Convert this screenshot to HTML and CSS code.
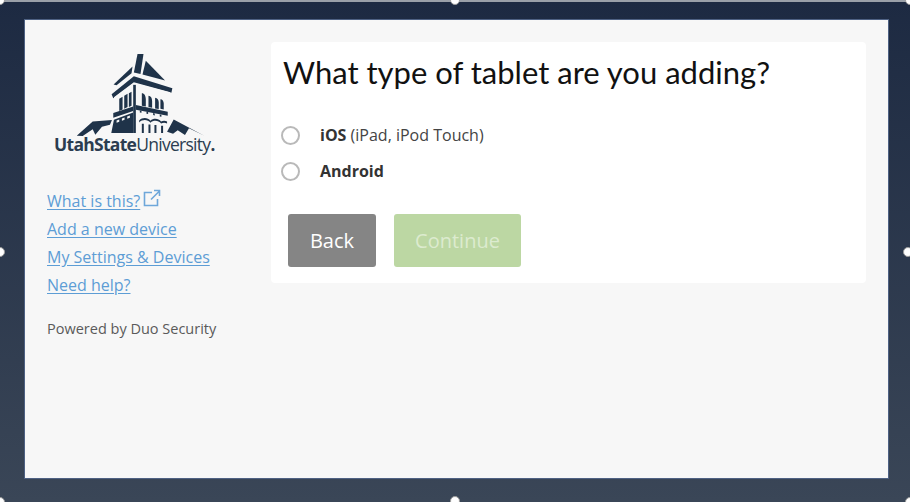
FILE: index.html
```html
<!DOCTYPE html>
<html lang="en">
<head>
<meta charset="utf-8">
<title>Duo enrollment</title>
<link rel="stylesheet" href="styles.css">
</head>
<body>
<div class="frame">
  <span class="handle h-tl"></span><span class="handle h-t"></span><span class="handle h-tr"></span>
  <span class="handle h-l"></span><span class="handle h-r"></span>
  <span class="handle h-bl"></span><span class="handle h-b"></span><span class="handle h-br"></span>
  <main class="panel">
    <aside class="sidebar">
      <div class="logo">
        <svg class="logo-mark" viewBox="120 50 400 265" width="133" height="88" aria-hidden="true">
          <g fill="#1f3349">
            <path d="M311 62h18l-9 60-20-4z"/>
            <path d="M336 82l58 60-68-18z"/>
            <path d="M296 100l-3 20-45 36-9-2z"/>
            <path d="M233 183l67-54 116 36-3 14-113-30-62 46z"/>
            <path d="M240 192l60-45 110 30-2 6-108-27-58 44z" fill="#f7f7f7"/>
            <path d="M298 155h8v145h-8z"/>
            <path d="M256 197l10-6v38l-10 5zM271 188l10-6v40l-10 5zM285 180l8-4v42l-8 4z"/>
            <path d="M238 240l60-20v14l-60 20zM306 216l96 20v12l-96-18z"/>
            <path d="M324 180c8 0 12 8 12 18v22l-12-2zM344 188c7 0 11 7 11 16v20l-11-2zM364 194c7 0 11 7 11 14v20l-11-2zM380 198c6 0 10 6 10 13v18l-10-2z"/>
            <path d="M232 300l8-40 58-22v62zM248 262l8-3v7l-8 3zM264 256l8-3v7l-8 3zM280 250l8-3v7l-8 3z" fill-rule="evenodd"/>
            <path d="M318 232l5 1v6l-5-1zM338 236l5 1v6l-5-1zM358 240l5 1v6l-5-1zM378 244l5 1v6l-5-1z"/>
            <path d="M316 262c10-10 26-9 34 1 8-8 24-8 32 2 6-3 12-3 18 0v6c-6-3-12-3-18 0-8-10-24-10-32-2-8-10-24-11-34-1z"/>
            <path d="M324 272h6v28h-6zM344 274h6v26h-6zM362 276h6v24h-6zM382 278h6v22h-6z"/>
            <path d="M128 308l48-43 58-4-6 14-24 6-20 24-8-16-30 20z"/>
            <path d="M400 296l20-37 92 49-46-22-12 20-22-14-14 10z"/>
          </g>
        </svg>
        <div class="wordmark"><b>UtahState</b>University<small>.</small></div>
      </div>
      <nav class="links">
        <a href="#">What is this?</a><svg class="ext" viewBox="0 0 18 18" width="18" height="18" aria-hidden="true"><path d="M9 3.5H1.5v13h13V10M8 10.5L16.5 2M11 1.5h5.5V7" fill="none" stroke="#6ea7da" stroke-width="1.6"/></svg>
        <br><a href="#">Add a new device</a>
        <br><a href="#">My Settings &amp; Devices</a>
        <br><a href="#">Need help?</a>
      </nav>
      <p class="powered">Powered by Duo Security</p>
    </aside>
    <section class="card">
      <h1>What type of tablet are you adding?</h1>
      <div class="options">
        <label class="option"><span class="radio"></span><span><b>iOS</b> (iPad, iPod Touch)</span></label>
        <label class="option"><span class="radio"></span><span><b>Android</b></span></label>
      </div>
      <div class="actions">
        <button class="btn btn-back" type="button">Back</button>
        <button class="btn btn-continue" type="button">Continue</button>
      </div>
    </section>
  </main>
</div>
</body>
</html>
```
FILE: styles.css
```css
* { box-sizing: border-box; }
html, body { margin: 0; height: 100%; }
body { width: 910px; height: 502px; overflow: hidden; font-family: "Open Sans", sans-serif; background: #fff; }
.frame {
  position: relative;
  width: 910px;
  height: 502px;
  padding: 20px 22px 24px 25px;
  border-top: 2px solid #9aa0a8;
  background: linear-gradient(#1d2a42, #3a4657);
}
.frame { padding-top: 18px; }
.panel {
  display: flex;
  height: 458px;
  background: #f7f7f7;
  box-shadow: 0 0 0 1px #4e6183;
  padding: 22px 22px 0 22px;
}
.sidebar { width: 224px; flex: none; }
.logo { width: 172px; margin-left: 7px; margin-top: 8px; text-align: center; }
.logo-mark { display: block; margin: 0 auto; filter: blur(.4px); }
.wordmark { margin-top: -4px; font-size: 17.5px; line-height: 20px; color: #2b3d50; letter-spacing: -.72px; white-space: nowrap; text-align: left; }
.wordmark b { font-weight: 700; }
.wordmark small { font-size: 17px; font-weight: 700; }
.links { margin-top: 32px; font-size: 16px; line-height: 28px; white-space: nowrap; }
.links a { color: #5d9dd5; text-decoration: underline; text-underline-offset: 2px; }
.ext { margin-left: 3px; vertical-align: 0; }
.powered { margin: 20px 0 0; font-size: 14.5px; line-height: 20px; color: #5a5a5a; }
.card {
  flex: none;
  width: 595px;
  height: 241px;
  padding: 9px 12px;
  background: #fff;
  border-radius: 4px;
}
h1 { margin: 0; font-family: Lato, sans-serif; font-weight: 400; font-size: 31px; line-height: 42px; color: #111; white-space: nowrap; }
.options { margin-top: 24px; }
.option { display: flex; align-items: center; gap: 20px; height: 36px; padding-left: 0; font-size: 16px; color: #444; }
.option b { color: #333; }
.radio { flex: none; width: 19px; height: 19px; border: 2px solid #b9b9b9; border-radius: 50%; background: #fff; margin-left: -2px; }
.actions { display: flex; gap: 18px; margin-top: 25px; margin-left: 5px; }
.btn { height: 53px; border: 0; border-radius: 3px; font-family: "Open Sans", sans-serif; font-size: 20px; color: #fff; }
.btn-back { width: 88px; background: #858585; }
.btn-continue { width: 127px; background: #bcd7a3; color: #dcebcf; }
.handle { position: absolute; width: 10px; height: 10px; border-radius: 50%; background: #fff; border: 1px solid #9c9c9c; }
.h-tl { left: -5px; top: -7px; }
.h-t { left: 450px; top: -7px; }
.h-tr { left: 905px; top: -7px; }
.h-l { left: -5px; top: 245px; }
.h-r { left: 903px; top: 245px; }
.h-bl { left: -5px; top: 495px; }
.h-b { left: 450px; top: 494px; }
.h-br { left: 905px; top: 495px; }
```
